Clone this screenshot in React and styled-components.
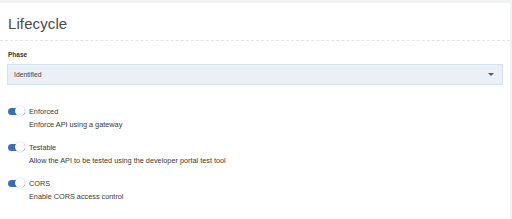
import React from "react";
import styled, { createGlobalStyle } from "styled-components";

const GlobalStyle = createGlobalStyle`
  html, body {
    margin: 0;
    padding: 0;
    background: #f1f2f4;
    font-family: "Liberation Sans", Arial, sans-serif;
  }
`;

const Page = styled.div`
  padding: 3px 2px 0 0;
  height: 219px;
  box-sizing: border-box;
`;

const Card = styled.section`
  background: #fff;
  height: 100%;
  box-sizing: border-box;
`;

const Header = styled.header`
  height: 38px;
  display: flex;
  align-items: center;
  padding: 4px 8px 0;
  box-sizing: border-box;
  border-bottom: 1px dashed #e2e4e8;
  h2 {
    margin: 0;
    font-size: 15px;
    font-weight: 300;
    color: #4a4a4a;
    letter-spacing: 0.1px;
  }
`;

const Body = styled.div`
  padding: 10px 7px 0 7px;
`;

const FieldLabel = styled.label`
  display: block;
  font-size: 6.5px;
  font-weight: bold;
  color: #333;
  margin-left: 1px;
  margin-bottom: 6px;
`;

const Select = styled.div`
  height: 21px;
  box-sizing: border-box;
  background: #ebf0f7;
  border: 1px solid #d5e2f2;
  display: flex;
  align-items: center;
  justify-content: space-between;
  padding: 0 6px 0 6px;
  font-size: 6.8px;
  color: #444;
`;

const Caret = styled.span`
  width: 0;
  height: 0;
  border-left: 3px solid transparent;
  border-right: 3px solid transparent;
  border-top: 3px solid #3d5f8a;
  margin-right: 2px;
`;

const Toggles = styled.div`
  display: flex;
  flex-direction: column;
  gap: 14px;
  margin-top: 22px;
  padding-left: 1px;
`;

const Row = styled.div`
  display: grid;
  grid-template-columns: 21px 1fr;
  row-gap: 4px;
  align-items: center;
`;

const Switch = styled.span`
  position: relative;
  width: 17px;
  height: 7px;
  border-radius: 4px;
  background: ${(p) => (p.$on ? "#3d70b2" : "#c9ccd1")};
  &::after {
    content: "";
    position: absolute;
    top: -2px;
    left: ${(p) => (p.$on ? "7px" : "-1px")};
    width: 10px;
    height: 10px;
    border-radius: 50%;
    background: #fff;
    box-shadow: 0 0 1px 0.5px rgba(0, 0, 0, 0.15);
  }
`;

const Name = styled.span`
  font-size: 7.3px;
  color: #3a3a3a;
  line-height: 9px;
`;

const Desc = styled.span`
  grid-column: 2;
  font-size: 7.3px;
  color: #3a3a3a;
  line-height: 9px;
`;

const items = [
  { name: "Enforced", desc: "Enforce API using a gateway" },
  {
    name: "Testable",
    desc: "Allow the API to be tested using the developer portal test tool",
  },
  { name: "CORS", desc: "Enable CORS access control" },
];

export default function App() {
  return (
    <>
      <GlobalStyle />
      <Page>
        <Card>
          <Header>
            <h2>Lifecycle</h2>
          </Header>
          <Body>
            <FieldLabel>Phase</FieldLabel>
            <Select>
              <span>Identified</span>
              <Caret />
            </Select>
            <Toggles>
              {items.map((it) => (
                <Row key={it.name}>
                  <Switch $on />
                  <Name>{it.name}</Name>
                  <Desc>{it.desc}</Desc>
                </Row>
              ))}
            </Toggles>
          </Body>
        </Card>
      </Page>
    </>
  );
}
